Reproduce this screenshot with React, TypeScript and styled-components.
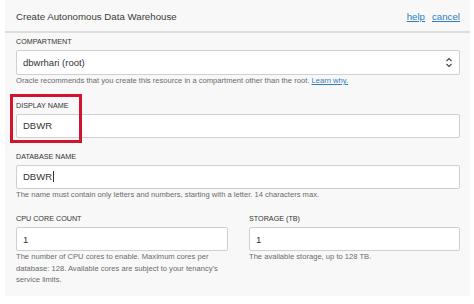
import React from 'react';
import styled, { createGlobalStyle } from 'styled-components';

const GlobalStyle = createGlobalStyle`
  html, body {
    margin: 0;
    padding: 0;
    background: #ffffff;
    font-family: 'Liberation Sans', Arial, sans-serif;
    color: #333333;
  }
`;

const Page = styled.div`
  padding: 0 4px 0 5px;
  width: 465px;
`;

const Card = styled.div`
  background: #f8f8f8;
`;

const Header = styled.div`
  height: 33px;
  display: flex;
  align-items: center;
  justify-content: space-between;
  padding: 2px 10px 0 11px;
  box-sizing: border-box;
  border-bottom: 2px solid #dedede;
`;

const Title = styled.div`
  font-size: 9.7px;
  color: #3a3a3a;
`;

const Links = styled.div`
  display: flex;
  gap: 7px;
`;

const Link = styled.a`
  font-size: 9.7px;
  color: #2f7ec1;
  text-decoration: underline;
  cursor: pointer;
`;

const Body = styled.div`
  padding: 4px 10px 10px 11px;
`;

const Field = styled.div<{ first?: boolean }>`
  position: relative;
  margin-top: ${(p) => (p.first ? '0' : '14px')};
`;

const Label = styled.div`
  font-size: 7.2px;
  line-height: 10px;
  height: 10px;
  color: #333333;
  text-transform: uppercase;
  margin-bottom: 3px;
`;

const InputBox = styled.div<{ tall?: boolean }>`
  height: ${(p) => (p.tall ? '25px' : '24px')};
  box-sizing: border-box;
  background: #ffffff;
  border: 1px solid #cfcfcf;
  border-radius: 2px;
  display: flex;
  align-items: center;
  justify-content: space-between;
  padding: 0 6px 0 6px;
  font-size: 9.5px;
  color: #333333;
`;

const Caret = styled.span`
  display: inline-block;
  width: 1px;
  height: 11px;
  background: #333333;
  margin-left: 1px;
  vertical-align: -2px;
`;

const Help = styled.div`
  font-size: 7.6px;
  line-height: 11.5px;
  color: #6b6b6b;
`;

const HelpLink = styled.a`
  color: #2f7ec1;
  text-decoration: underline;
`;

const Columns = styled.div`
  display: grid;
  grid-template-columns: 212px 211px;
  column-gap: 21px;
  margin-top: 14px;
`;

const Highlight = styled.div`
  position: absolute;
  left: -6px;
  top: -7px;
  width: 72px;
  height: 49px;
  box-sizing: border-box;
  border: 3px solid #d2152f;
  pointer-events: none;
`;

const SelectArrows = () => (
  <svg width="8" height="11" viewBox="0 0 8 11" fill="none">
    <path d="M1.5 4 L4 1.5 L6.5 4" stroke="#444" strokeWidth="1.1" />
    <path d="M1.5 7 L4 9.5 L6.5 7" stroke="#444" strokeWidth="1.1" />
  </svg>
);

const App: React.FC = () => {
  return (
    <Page>
      <GlobalStyle />
      <Card>
        <Header>
          <Title>Create Autonomous Data Warehouse</Title>
          <Links>
            <Link>help</Link>
            <Link>cancel</Link>
          </Links>
        </Header>
        <Body>
          <Field first>
            <Label>Compartment</Label>
            <InputBox tall>
              <span>dbwrhari (root)</span>
              <SelectArrows />
            </InputBox>
            <Help>
              Oracle recommends that you create this resource in a compartment other than the root.{' '}
              <HelpLink>Learn why.</HelpLink>
            </Help>
          </Field>
          <Field>
            <Highlight />
            <Label>Display Name</Label>
            <InputBox>
              <span>DBWR</span>
            </InputBox>
          </Field>
          <Field>
            <Label>Database Name</Label>
            <InputBox>
              <span>
                DBWR
                <Caret />
              </span>
            </InputBox>
            <Help>
              The name must contain only letters and numbers, starting with a letter. 14 characters max.
            </Help>
          </Field>
          <Columns>
            <Field first>
              <Label>CPU Core Count</Label>
              <InputBox>
                <span>1</span>
              </InputBox>
              <Help>
                The number of CPU cores to enable. Maximum cores per database: 128. Available cores are
                subject to your tenancy's service limits.
              </Help>
            </Field>
            <Field first>
              <Label>Storage (TB)</Label>
              <InputBox>
                <span>1</span>
              </InputBox>
              <Help>The available storage, up to 128 TB.</Help>
            </Field>
          </Columns>
        </Body>
      </Card>
    </Page>
  );
};

export default App;
